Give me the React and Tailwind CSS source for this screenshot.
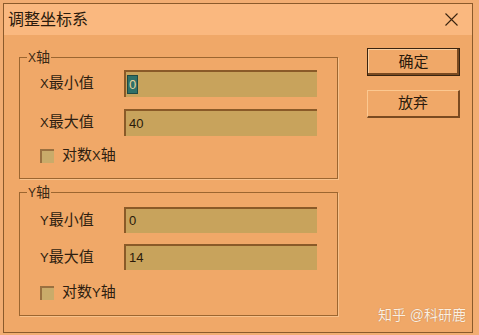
import React from "react";

const FONT = { fontFamily: '"Liberation Sans", "Noto Sans CJK SC", sans-serif' };

function L({ children }) {
  return <span className="text-[13px]">{children}</span>;
}

function Field({ axis, rest, value, selected, h }) {
  return (
    <div className="flex items-center">
      <span className="w-[84px] text-[15px] leading-[20px] text-[#2e1e10]">
        <L>{axis}</L>
        {rest}
      </span>
      <div
        className={`w-[193px] ${h} bg-[#c8a35c] border-t-2 border-l-2 border-[#8a5a28] flex items-center pl-[2px] text-[13px] text-[#2a1a0a]`}
      >
        {selected ? (
          <span className="bg-[#2f7068] text-[#e8d29a] outline outline-1 outline-[#1f4a44] px-[1px] leading-[17px]">
            {value}
          </span>
        ) : (
          <span className="pl-[1px]">{value}</span>
        )}
      </div>
    </div>
  );
}

function Check({ axis }) {
  return (
    <div className="flex items-center gap-[8px]">
      <div className="w-[14px] h-[14px] bg-[#c9ab6a] border-t-2 border-l-2 border-[#9a7040]" />
      <span className="text-[15px] leading-[20px] text-[#2e1e10]">
        对数<L>{axis}</L>轴
      </span>
    </div>
  );
}

function Group({ axis, children, className }) {
  return (
    <div className={`relative border border-[#9c6630] shadow-[1px_1px_0_#f8c28c] ${className}`}>
      <span className="absolute -top-[9px] left-[7px] px-[1px] bg-[#f0a868] text-[14px] leading-[16px] text-[#3a2814]">
        <span className="text-[12px]">{axis}</span>轴
      </span>
      {children}
    </div>
  );
}

export default function App() {
  return (
    <div className="w-[479px] h-[335px] bg-[#f2ad72] overflow-hidden" style={FONT}>
      <div className="relative ml-[3px] mt-[3px] w-[470px] h-[330px] border border-[#8b5a2b] flex flex-col bg-[#f0a868]">
        <div className="h-[31px] bg-[#fab87f] flex items-center justify-between pl-[4px] pr-[14px]">
          <span className="text-[16px] leading-[20px] text-[#2a1a0c]">调整坐标系</span>
          <svg width="13" height="13" viewBox="0 0 13 13">
            <path d="M0.5 0.5 L12.5 12.5 M12.5 0.5 L0.5 12.5" stroke="#3a2410" strokeWidth="1.1" fill="none" />
          </svg>
        </div>
        <div className="flex flex-1 pl-[15px] pt-[13px]">
          <div className="w-[319px] flex flex-col gap-[13px] pt-[9px]">
            <Group axis="X" className="h-[122px] pt-[12px] pl-[20px]">
              <div className="flex flex-col gap-[12px]">
                <Field axis="X" rest="最小值" value="0" selected h="h-[27px]" />
                <Field axis="X" rest="最大值" value="40" h="h-[27px]" />
              </div>
              <div className="mt-[9px]">
                <Check axis="X" />
              </div>
            </Group>
            <Group axis="Y" className="h-[124px] pt-[14px] pl-[20px]">
              <div className="flex flex-col gap-[11px]">
                <Field axis="Y" rest="最小值" value="0" h="h-[26px]" />
                <Field axis="Y" rest="最大值" value="14" h="h-[26px]" />
              </div>
              <div className="mt-[12px]">
                <Check axis="Y" />
              </div>
            </Group>
          </div>
          <div className="ml-[29px] flex flex-col gap-[14px]">
            <button className="w-[93px] h-[28px] border border-[#3a2410] shadow-[inset_-2px_-2px_0_#7a4a20,inset_1px_1px_0_#fcd0a0] text-[15px] text-[#2a1a0c] flex items-center justify-center">
              确定
            </button>
            <button className="w-[93px] h-[28px] border-t border-l border-[#fcc890] border-r-2 border-b-2 border-r-[#7a4a20] border-b-[#7a4a20] text-[15px] text-[#2a1a0c] flex items-center justify-center">
              放弃
            </button>
          </div>
        </div>
        <span className="absolute right-[6px] bottom-[8px] text-[14px] leading-[18px] text-[#fdf0e0] [text-shadow:0_0_1px_#b07040]">
          知乎 @科研鹿
        </span>
      </div>
    </div>
  );
}
